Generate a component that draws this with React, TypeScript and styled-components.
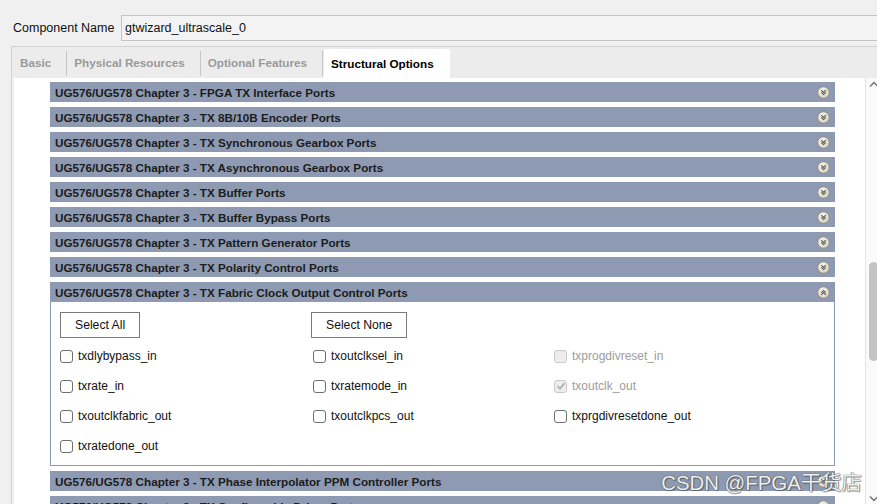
import React from "react";
import styled, { createGlobalStyle } from "styled-components";

const Global = createGlobalStyle`
  html, body { margin: 0; padding: 0; background: #f0f0f0; }
  body { font-family: "Liberation Sans", Arial, sans-serif; }
  * { box-sizing: border-box; }
`;

const Root = styled.div`
  width: 877px;
  height: 504px;
  overflow: hidden;
  position: relative;
  display: flex;
  flex-direction: column;
  background: #f0f0f0;
`;

const NameRow = styled.div`
  height: 46px;
  display: flex;
  align-items: center;
  padding-left: 13px;
  padding-top: 10px;
  flex-shrink: 0;
`;

const NameLabel = styled.span`
  font-size: 12.5px;
  color: #111;
  width: 108px;
`;

const NameInput = styled.div`
  flex: 1;
  margin-right: -10px;
  height: 26px;
  border: 1px solid #c4c4c4;
  background: #f3f3f3;
  display: flex;
  align-items: center;
  padding-left: 3px;
  font-size: 12.5px;
  color: #111;
`;

const Panel = styled.div`
  flex: 1;
  margin-left: 11px;
  border-left: 1px solid #d2d2d2;
  border-top: 1px solid #d2d2d2;
  display: flex;
  flex-direction: column;
  min-height: 0;
`;

const TabBar = styled.div`
  height: 31px;
  background: #ececec;
  display: flex;
  align-items: flex-end;
  flex-shrink: 0;
  padding-left: 1px;
`;

const Tab = styled.div<{ $active?: boolean }>`
  height: ${(p) => (p.$active ? 29 : 31)}px;
  display: flex;
  align-items: center;
  padding: 0 ${(p) => (p.$active ? 16 : 15)}px 0 7px;
  font-size: 11.7px;
  font-weight: bold;
  color: ${(p) => (p.$active ? "#000" : "#9a9a9a")};
  background: ${(p) => (p.$active ? "#fff" : "transparent")};
  margin-left: ${(p) => (p.$active ? 1 : 0)}px;
`;

const TabSep = styled.div`
  width: 1px;
  height: 25px;
  background: #c6c6c6;
  align-self: center;
  margin-top: 2px;
`;

const Body = styled.div`
  flex: 1;
  display: flex;
  min-height: 0;
  margin-left: 2px;
  background: #fff;
`;

const Content = styled.div`
  flex: 1;
  padding: 4px 30px 0 36px;
  display: flex;
  flex-direction: column;
  gap: 5px;
  overflow: hidden;
`;

const Section = styled.div`
  display: flex;
  flex-direction: column;
  flex-shrink: 0;
`;

const Header = styled.div`
  height: 20px;
  background: #8d9ab2;
  display: flex;
  align-items: center;
  justify-content: space-between;
  padding: 0 5px 0 5px;
  font-size: 11.7px;
  font-weight: bold;
  color: #1c1c1c;
  white-space: nowrap;
`;

const SectionBody = styled.div`
  border: 1px solid #8d9ab2;
  border-top: none;
  padding: 10px 0 4px 9px;
  display: grid;
  grid-template-columns: 253px 241px 1fr;
  grid-auto-rows: 30px;
  grid-template-rows: 29px;
`;

const ButtonCell = styled.div<{ $shift?: number }>`
  display: flex;
  align-items: flex-start;
  margin-left: ${(p) => p.$shift ?? 0}px;
`;

const Button = styled.div`
  height: 26px;
  border: 1px solid #7a7a7a;
  background: #fff;
  padding: 0 14px;
  display: flex;
  align-items: center;
  font-size: 12.2px;
  color: #111;
`;

const CheckRow = styled.label<{ $disabled?: boolean }>`
  display: flex;
  align-items: center;
  gap: 5px;
  font-size: 12px;
  color: ${(p) => (p.$disabled ? "#9d9d9d" : "#111")};
`;

const Box = styled.span<{ $disabled?: boolean }>`
  width: 13px;
  height: 13px;
  border-radius: 3px;
  border: 1px solid ${(p) => (p.$disabled ? "#c9c9c9" : "#6f6f6f")};
  background: ${(p) => (p.$disabled ? "#ededed" : "#fff")};
  display: inline-flex;
  align-items: center;
  justify-content: center;
  flex-shrink: 0;
`;

const ScrollTrack = styled.div`
  width: 12px;
  border-left: 1px solid #e4e4e4;
  background: #fafafa;
  display: flex;
  flex-direction: column;
  align-items: center;
  flex-shrink: 0;
`;

const ScrollArrow = styled.div<{ $down?: boolean }>`
  height: 12px;
  display: flex;
  align-items: center;
  justify-content: center;
  margin-top: ${(p) => (p.$down ? "auto" : "0")};
  margin-left: 4px;
`;

const Thumb = styled.div`
  width: 9px;
  margin-left: 3px;
  height: 99px;
  margin-top: 172px;
  border-radius: 5px;
  background: #c4c4c4;
`;

const Watermark = styled.div`
  position: absolute;
  right: 15px;
  bottom: 8px;
  font-family: "Liberation Sans", "Noto Sans CJK SC", sans-serif;
  font-size: 20.4px;
  color: rgba(255, 255, 255, 0.92);
  text-shadow: 0 0 1px #555, 0 0 1px #555, 1px 1px 1px rgba(0, 0, 0, 0.35);
  white-space: nowrap;
  pointer-events: none;
`;

const ToggleIcon = ({ up }: { up?: boolean }) => (
  <svg width="13" height="13" viewBox="0 0 13 13">
    <defs>
      <radialGradient id={up ? "gu" : "gd"} cx="40%" cy="35%" r="70%">
        <stop offset="0%" stopColor="#fbf9f1" />
        <stop offset="100%" stopColor="#d3cfbd" />
      </radialGradient>
    </defs>
    <circle cx="6.5" cy="6.5" r="5.8" fill={`url(#${up ? "gu" : "gd"})`} stroke="#8c8b82" strokeWidth="0.9" />
    {up ? (
      <path d="M4.2 6.6 L6.5 4.4 L8.8 6.6 M4.2 8.8 L6.5 6.6 L8.8 8.8" fill="none" stroke="#5a5a55" strokeWidth="1.1" />
    ) : (
      <path d="M4.2 4.2 L6.5 6.4 L8.8 4.2 M4.2 6.4 L6.5 8.6 L8.8 6.4" fill="none" stroke="#5a5a55" strokeWidth="1.1" />
    )}
  </svg>
);

const Check = ({ checked, disabled }: { checked?: boolean; disabled?: boolean }) => (
  <Box $disabled={disabled}>
    {checked && (
      <svg width="10" height="10" viewBox="0 0 10 10">
        <path d="M1.5 5.2 L4 7.6 L8.6 2.2" fill="none" stroke={disabled ? "#b0b0b0" : "#333"} strokeWidth="1.8" />
      </svg>
    )}
  </Box>
);

const Chevron = ({ down }: { down?: boolean }) => (
  <svg width="10" height="7" viewBox="0 0 10 7">
    <path d={down ? "M1 1.5 L5 5.5 L9 1.5" : "M1 5.5 L5 1.5 L9 5.5"} fill="none" stroke="#707070" strokeWidth="1.4" />
  </svg>
);

const prefix = "UG576/UG578 Chapter 3 - ";
const before = [
  "FPGA TX Interface Ports",
  "TX 8B/10B Encoder Ports",
  "TX Synchronous Gearbox Ports",
  "TX Asynchronous Gearbox Ports",
  "TX Buffer Ports",
  "TX Buffer Bypass Ports",
  "TX Pattern Generator Ports",
  "TX Polarity Control Ports",
];
const after = ["TX Phase Interpolator PPM Controller Ports", "TX Configurable Driver Ports"];

type Opt = { name: string; checked?: boolean; disabled?: boolean };
const options: Opt[] = [
  { name: "txdlybypass_in" },
  { name: "txoutclksel_in" },
  { name: "txprogdivreset_in", disabled: true },
  { name: "txrate_in" },
  { name: "txratemode_in" },
  { name: "txoutclk_out", checked: true, disabled: true },
  { name: "txoutclkfabric_out" },
  { name: "txoutclkpcs_out" },
  { name: "txprgdivresetdone_out" },
  { name: "txratedone_out" },
];

const CollapsedSection = ({ title }: { title: string }) => (
  <Section>
    <Header>
      <span>{prefix + title}</span>
      <ToggleIcon />
    </Header>
  </Section>
);

export default function App() {
  return (
    <Root>
      <Global />
      <NameRow>
        <NameLabel>Component Name</NameLabel>
        <NameInput>gtwizard_ultrascale_0</NameInput>
      </NameRow>
      <Panel>
        <TabBar>
          <Tab>Basic</Tab>
          <TabSep />
          <Tab>Physical Resources</Tab>
          <TabSep />
          <Tab>Optional Features</Tab>
          <TabSep />
          <Tab $active>Structural Options</Tab>
        </TabBar>
        <Body>
          <Content>
            {before.map((t) => (
              <CollapsedSection key={t} title={t} />
            ))}
            <Section>
              <Header>
                <span>{prefix}TX Fabric Clock Output Control Ports</span>
                <ToggleIcon up />
              </Header>
              <SectionBody>
                <ButtonCell>
                  <Button>Select All</Button>
                </ButtonCell>
                <ButtonCell $shift={-2}>
                  <Button>Select None</Button>
                </ButtonCell>
                <div />
                {options.map((o) => (
                  <CheckRow key={o.name} $disabled={o.disabled}>
                    <Check checked={o.checked} disabled={o.disabled} />
                    {o.name}
                  </CheckRow>
                ))}
              </SectionBody>
            </Section>
            {after.map((t) => (
              <CollapsedSection key={t} title={t} />
            ))}
          </Content>
          <ScrollTrack>
            <ScrollArrow>
              <Chevron />
            </ScrollArrow>
            <Thumb />
            <ScrollArrow $down>
              <Chevron down />
            </ScrollArrow>
          </ScrollTrack>
        </Body>
      </Panel>
      <Watermark>CSDN @FPGA干货店</Watermark>
    </Root>
  );
}
